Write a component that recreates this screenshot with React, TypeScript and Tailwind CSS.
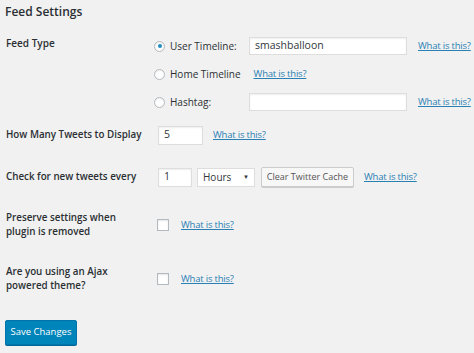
import React from 'react';

const font = { fontFamily: '"Open Sans", "Liberation Sans", sans-serif' };

const Help = ({ className = '' }: { className?: string }) => (
  <a href="#" className={`shrink-0 whitespace-nowrap text-[9.5px] tracking-[-0.2px] text-[#2a7fb3] underline ${className}`}>
    What is this?
  </a>
);

const Radio = ({ checked = false }: { checked?: boolean }) => (
  <span className="flex h-[11px] w-[11px] shrink-0 items-center justify-center rounded-full border border-[#b4b9be] bg-white shadow-[inset_0_1px_2px_rgba(0,0,0,0.07)]">
    {checked && <span className="h-[4px] w-[4px] rounded-full bg-[#1e8cbe]" />}
  </span>
);

const Checkbox = () => (
  <span className="block h-[12px] w-[12px] shrink-0 border border-[#b4b9be] bg-white shadow-[inset_0_1px_2px_rgba(0,0,0,0.1)]" />
);

const Field = ({ value = '', className = '' }: { value?: string; className?: string }) => (
  <div
    className={`flex shrink-0 items-center border border-[#ddd] bg-white px-[5px] text-[10.5px] text-[#32373c] shadow-[inset_0_1px_2px_rgba(0,0,0,0.07)] ${className}`}
  >
    {value}
  </div>
);

export default function App() {
  return (
    <div className="h-[353px] w-[474px] overflow-hidden bg-[#f1f1f1] text-[#2b2f33]" style={font}>
      <div className="px-[5px] pt-[4px]">
        <h2 className="text-[12px] font-semibold leading-[16px]">Feed Settings</h2>

        {/* Feed type */}
        <div className="mt-[12px] flex">
          <div className="w-[149px] shrink-0 pl-[1px] pt-[4px] text-[10px] font-semibold leading-[14px]">Feed Type</div>
          <div className="flex flex-col">
            <div className="flex h-[28px] items-center">
              <Radio checked />
              <span className="ml-[5px] w-[79px] shrink-0 text-[10px]">User Timeline:</span>
              <Field value="smashballoon" className="h-[18px] w-[158px]" />
              <Help className="ml-[11px]" />
            </div>
            <div className="flex h-[28px] items-center">
              <Radio />
              <span className="ml-[5px] text-[10px]">Home Timeline</span>
              <Help className="ml-[13px]" />
            </div>
            <div className="flex h-[28px] items-center">
              <Radio />
              <span className="ml-[5px] w-[79px] shrink-0 text-[10px]">Hashtag:</span>
              <Field className="h-[18px] w-[158px]" />
              <Help className="ml-[11px]" />
            </div>
          </div>
        </div>

        {/* Tweet count */}
        <div className="mt-[9px] flex h-[20px] items-center">
          <div className="w-[153px] shrink-0 pl-[1px] text-[9.8px] font-semibold">How Many Tweets to Display</div>
          <Field value="5" className="h-[19px] w-[45px]" />
          <Help className="ml-[10px]" />
        </div>

        {/* Check interval */}
        <div className="mt-[22px] flex h-[20px] items-center">
          <div className="w-[153px] shrink-0 pl-[1px] text-[9.8px] font-semibold">Check for new tweets every</div>
          <Field value="1" className="h-[19px] w-[34px]" />
          <div className="ml-[5px] flex h-[19px] w-[58px] shrink-0 items-center justify-between border border-[#ddd] bg-white px-[5px] text-[10px] text-[#32373c]">
            <span>Hours</span>
            <span className="text-[6px]">▼</span>
          </div>
          <button className="ml-[6px] flex h-[20px] w-[93px] shrink-0 items-center justify-center whitespace-nowrap rounded-[2px] border border-[#ccc] bg-[#f7f7f7] text-[9px] text-[#555] shadow-[0_1px_0_#ccc]">
            Clear Twitter Cache
          </button>
          <Help className="ml-[10px]" />
        </div>

        {/* Preserve */}
        <div className="mt-[24px] flex h-[28px] items-center">
          <div className="w-[152px] shrink-0 pl-[1px] text-[9.8px] font-semibold leading-[14px]">
            Preserve settings when
            <br />
            plugin is removed
          </div>
          <Checkbox />
          <Help className="ml-[12px]" />
        </div>

        {/* Ajax */}
        <div className="mt-[26px] flex h-[28px] items-center">
          <div className="w-[152px] shrink-0 pl-[1px] text-[9.8px] font-semibold leading-[14px]">
            Are you using an Ajax
            <br />
            powered theme?
          </div>
          <Checkbox />
          <Help className="ml-[12px]" />
        </div>

        <button className="mt-[27px] h-[25px] w-[72px] rounded-[2px] border border-[#0073aa] bg-[#0085ba] text-[9.5px] text-white shadow-[0_1px_0_#006799]">
          Save Changes
        </button>
      </div>
    </div>
  );
}
